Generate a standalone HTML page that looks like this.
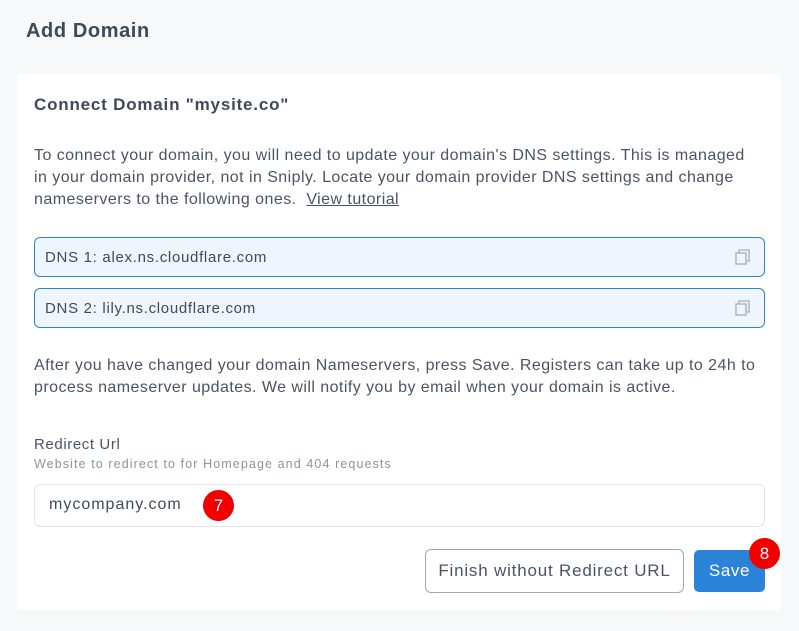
<!DOCTYPE html>
<html><head><style>
*{margin:0;padding:0;box-sizing:border-box}
body{width:799px;height:631px;background:#f7f8fa;font-family:"Liberation Sans",sans-serif;color:#3f4b58;position:relative;overflow:hidden}
.a{position:absolute;white-space:nowrap}
h1{position:absolute;left:26px;top:20px;font-size:20px;font-weight:bold;color:#3d4a59;letter-spacing:0.6px}
.card{position:absolute;left:17px;top:74px;width:764px;height:536px;background:#fff;border-radius:3px}
.dns{position:absolute;left:34px;width:731px;height:40px;background:#eef5fd;border:1.5px solid #2a83d9;border-radius:6px;font-size:15px;padding:11px 0 0 10px;color:#3f4b58;letter-spacing:0.7px}
.cp{position:absolute;right:12px;top:10px}
.p{font-size:16px;line-height:22px;color:#4a5562;letter-spacing:0.45px}
.badge{position:absolute;width:31px;height:31px;border-radius:50%;background:#f20000;color:#fff;font-size:17px;text-align:center;line-height:31px}
</style></head><body>
<h1>Add Domain</h1>
<div class="card"></div>
<div class="a" style="left:34px;top:95px;font-size:17px;font-weight:bold;color:#3d4a59;letter-spacing:0.8px">Connect Domain "mysite.co"</div>
<div class="a p" style="left:34px;top:145px">To connect your domain, you will need to update your domain's DNS settings. This is managed<br>in your domain provider, not in Sniply. Locate your domain provider DNS settings and change<br>nameservers to the following ones.&nbsp; <u>View tutorial</u></div>
<div class="dns" style="top:237px">DNS 1: alex.ns.cloudflare.com<svg class="cp" width="18" height="18" viewBox="0 0 18 18" fill="none" stroke="#b0bac4" stroke-width="1.6"><rect x="2" y="5" width="10" height="11"/><path d="M5 5V2h10v11h-3"/></svg></div>
<div class="dns" style="top:288px">DNS 2: lily.ns.cloudflare.com<svg class="cp" width="18" height="18" viewBox="0 0 18 18" fill="none" stroke="#b0bac4" stroke-width="1.6"><rect x="2" y="5" width="10" height="11"/><path d="M5 5V2h10v11h-3"/></svg></div>
<div class="a p" style="left:34px;top:355px">After you have changed your domain Nameservers, press Save. Registers can take up to 24h to<br>process nameserver updates. We will notify you by email when your domain is active.</div>
<div class="a" style="left:34px;top:436px;font-size:15px;color:#4a5562;letter-spacing:0.6px">Redirect Url</div>
<div class="a" style="left:34px;top:457px;font-size:12.5px;color:#8a949e;letter-spacing:1.1px">Website to redirect to for Homepage and 404 requests</div>
<div class="a" style="left:34px;top:484px;width:731px;height:43px;border:1px solid #e2e5e9;border-radius:6px;font-size:16px;padding:11px 0 0 14px;color:#3f4b58;letter-spacing:1px">mycompany.com</div>
<div class="badge" style="left:203px;top:490px">7</div>
<div class="a" style="left:425px;top:549px;width:259px;height:44px;border:1px solid #9aaabb;border-radius:6px;font-size:17px;text-align:center;line-height:42px;color:#4a5562;letter-spacing:0.8px">Finish without Redirect URL</div>
<div class="a" style="left:694px;top:550px;width:71px;height:42px;background:#2a83d9;border-radius:5px;font-size:17px;text-align:center;line-height:42px;color:#fff;letter-spacing:0.6px">Save</div>
<div class="badge" style="left:749px;top:538px">8</div>
</body></html>
